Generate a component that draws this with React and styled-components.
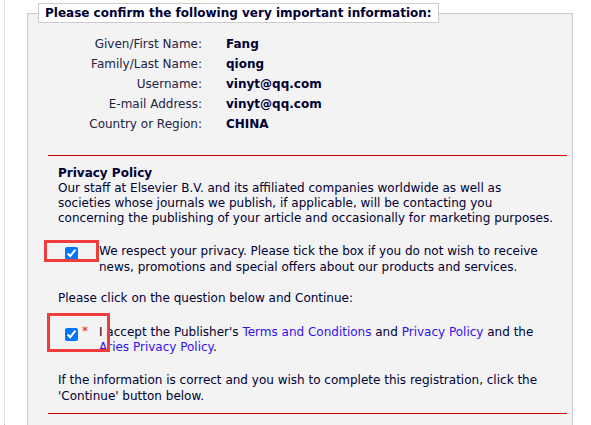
import React from "react";
import styled, { createGlobalStyle } from "styled-components";

const GlobalStyle = createGlobalStyle`
  html, body { margin: 0; padding: 0; background: #ffffff; }
  body {
    font-family: "DejaVu Sans", Verdana, sans-serif;
    font-size: 12px;
    color: #000033;
  }
`;

const Page = styled.div`
  margin-left: 4px;
  border-left: 1px dotted #c4c4c4;
  padding: 3px 0 0 22px;
  min-height: 600px;
  width: 546px;
`;

const Panel = styled.fieldset`
  margin: 0;
  border: 1px solid #cccccc;
  background: #f3f3f3;
  padding: 0 5px 40px 10px;
  min-width: 0;
`;

const Legend = styled.legend`
  background: #ffffff;
  border: 1px solid #cccccc;
  padding: 0 6px 0 6px;
  line-height: 18px;
  font-weight: bold;
  font-size: 12px;
  color: #000033;
`;

const InfoGrid = styled.div`
  display: grid;
  grid-template-columns: 154px 1fr;
  column-gap: 24px;
  margin: 11px 0 0 10px;
`;

const Label = styled.div`
  text-align: right;
  line-height: 20px;
  color: #222244;
`;

const Value = styled.div`
  line-height: 20px;
  font-weight: bold;
  color: #000033;
`;

const Section = styled.div`
  margin: ${(p) => p.$top}px 0 0 10px;
  border-top: 1px solid #cc0000;
  padding: 10px 0 0 10px;
`;

const Heading = styled.div`
  font-weight: bold;
  font-size: 12px;
  line-height: 15px;
`;

const Para = styled.p`
  margin: ${(p) => p.$top || 0}px 0 0 0;
  line-height: ${(p) => p.$lh || 15}px;
  white-space: nowrap;
`;

const CheckRow = styled.div`
  display: flex;
  align-items: flex-start;
  margin-top: ${(p) => p.$top}px;
  line-height: ${(p) => p.$lh}px;
`;

const CheckCell = styled.div`
  position: relative;
  flex: 0 0 41px;
  display: flex;
  align-items: flex-start;
  padding-top: ${(p) => p.$pad}px;
  padding-left: 7px;
  box-sizing: border-box;
`;

const Box = styled.input.attrs({ type: "checkbox" })`
  margin: 0;
  width: 13px;
  height: 13px;
`;

const Required = styled.span`
  color: #ee1111;
  font-size: 12px;
  line-height: 12px;
  margin-left: 4px;
  margin-top: -3px;
`;

const Highlight = styled.div`
  position: absolute;
  box-sizing: border-box;
  border: 3px solid #ef3d3d;
  pointer-events: none;
`;

const RowText = styled.div`
  white-space: nowrap;
`;

const Link = styled.a`
  color: #3311ee;
  text-decoration: none;
`;

const info = [
  ["Given/First Name:", "Fang"],
  ["Family/Last Name:", "qiong"],
  ["Username:", "vinyt@qq.com"],
  ["E-mail Address:", "vinyt@qq.com"],
  ["Country or Region:", "CHINA"],
];

export default function App() {
  return (
    <>
      <GlobalStyle />
      <Page>
        <Panel>
          <Legend>Please confirm the following very important information:</Legend>
          <InfoGrid>
            {info.map(([l, v]) => (
              <React.Fragment key={l}>
                <Label>{l}</Label>
                <Value>{v}</Value>
              </React.Fragment>
            ))}
          </InfoGrid>
          <Section $top={21}>
            <Heading>Privacy Policy</Heading>
            <Para>
              Our staff at Elsevier B.V. and its affiliated companies worldwide as well as
              <br />
              societies whose journals we publish, if applicable, will be contacting you
              <br />
              concerning the publishing of your article and occasionally for marketing purposes.
            </Para>
            <CheckRow $top={17} $lh={16}>
              <CheckCell $pad={4}>
                <Box defaultChecked />
                <Highlight style={{ left: -14, top: -3, width: 55, height: 22 }} />
              </CheckCell>
              <RowText>
                We respect your privacy. Please tick the box if you do not wish to receive
                <br />
                news, promotions and special offers about our products and services.
              </RowText>
            </CheckRow>
            <Para $top={16}>Please click on the question below and Continue:</Para>
            <CheckRow $top={19} $lh={15}>
              <CheckCell $pad={3}>
                <Box defaultChecked />
                <Required>*</Required>
                <Highlight style={{ left: -11, top: -12, width: 63, height: 39 }} />
              </CheckCell>
              <RowText>
                I accept the Publisher's <Link href="#">Terms and Conditions</Link> and{" "}
                <Link href="#">Privacy Policy</Link> and the
                <br />
                <Link href="#">Aries Privacy Policy</Link>.
              </RowText>
            </CheckRow>
            <Para $top={17} $lh={16}>
              If the information is correct and you wish to complete this registration, click the
              <br />
              'Continue' button below.
            </Para>
          </Section>
          <Section $top={9} />
        </Panel>
      </Page>
    </>
  );
}
